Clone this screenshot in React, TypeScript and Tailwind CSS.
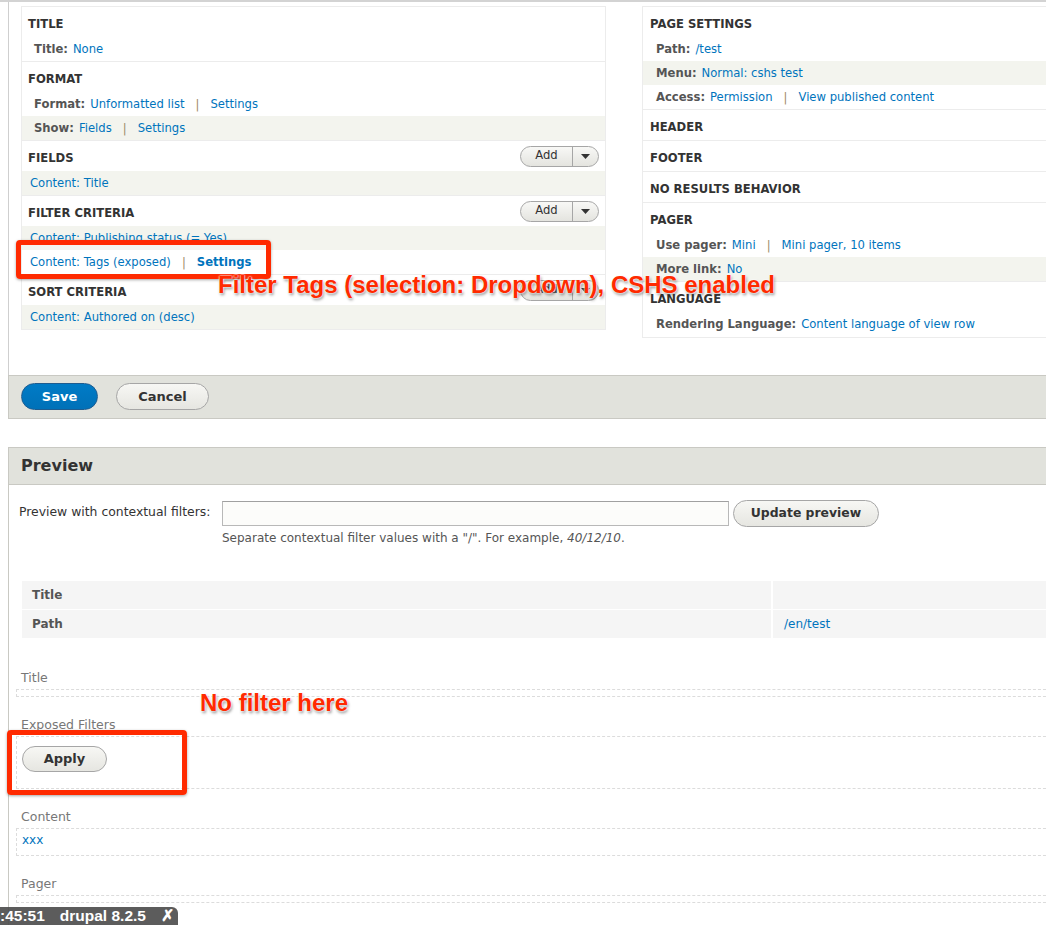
import React from "react";

const LINK = "text-[#0074bd]";

function AddBtn() {
  return (
    <div className="flex h-[21px] w-[79px] rounded-full border border-[#a6a6a6] bg-linear-to-b from-[#f8f8f6] to-[#e4e4df] text-[11.6px] font-normal text-[#333] normal-case">
      <span className="flex w-[52px] items-center justify-center border-r border-[#a6a6a6]">Add</span>
      <span className="flex flex-1 items-center justify-center">
        <svg width="9" height="5" viewBox="0 0 9 5">
          <path d="M0 0h9L4.5 5z" fill="#333" />
        </svg>
      </span>
    </div>
  );
}

function Heading({ children, add, pl = "pl-[6px]" }: { children: React.ReactNode; add?: boolean; pl?: string }) {
  return (
    <div className={"flex h-[30px] items-center justify-between pr-[6px] text-[11.6px] font-bold text-[#333] " + pl}>
      <span className="pt-[5px]">{children}</span>
      {add && <AddBtn />}
    </div>
  );
}

function Row({ children, alt, pl = "pl-[12px]" }: { children: React.ReactNode; alt?: boolean; pl?: string }) {
  return (
    <div className={"flex h-[24px] items-center pt-[2px] text-[11.6px] " + pl + (alt ? " bg-[#f3f4ee]" : "")}>{children}</div>
  );
}

function Label({ children }: { children: React.ReactNode }) {
  return <span className="mr-[5px] font-bold text-[#555]">{children}</span>;
}

function Sep() {
  return <span className="mx-[11px] text-[#a08a66]">|</span>;
}

function Bucket({ children, first }: { children: React.ReactNode; first?: boolean }) {
  return <div className={first ? "" : "border-t border-[#ececec]"}>{children}</div>;
}

function PreviewSection({ label, children, boxClass }: { label: string; children?: React.ReactNode; boxClass: string }) {
  return (
    <div>
      <div className="h-[18px] pl-[5px] text-[12.5px] leading-[18px] text-[#777]">{label}</div>
      <div className={"mt-[2px] border border-dashed border-[#dcdcdc] " + boxClass}>{children}</div>
    </div>
  );
}

export default function App() {
  return (
    <div className="relative h-[925px] w-[1046px] overflow-hidden bg-white font-['DejaVu_Sans',sans-serif] text-[#333]">
      {/* top edge */}
      <div className="h-[2px] bg-[#d3d3d3]" />

      {/* display area */}
      <div className="ml-[8px] flex h-[373px] gap-[36px] border-l border-[#cfcfcf] pl-[12px] pt-[4px]">
        {/* left column */}
        <div className="h-[324px] w-[585px] shrink-0 border border-[#ececec]">
          <Bucket first>
            <Heading>TITLE</Heading>
            <Row>
              <Label>Title:</Label>
              <span className={LINK}>None</span>
            </Row>
          </Bucket>
          <Bucket>
            <Heading>FORMAT</Heading>
            <Row>
              <Label>Format:</Label>
              <span className={LINK}>Unformatted list</span>
              <Sep />
              <span className={LINK}>Settings</span>
            </Row>
            <Row alt>
              <Label>Show:</Label>
              <span className={LINK}>Fields</span>
              <Sep />
              <span className={LINK}>Settings</span>
            </Row>
          </Bucket>
          <Bucket>
            <Heading add>FIELDS</Heading>
            <Row alt pl="pl-[8px]">
              <span className={LINK}>Content: Title</span>
            </Row>
          </Bucket>
          <Bucket>
            <Heading add>FILTER CRITERIA</Heading>
            <Row alt pl="pl-[8px]">
              <span className={LINK}>Content: Publishing status (= Yes)</span>
            </Row>
            <Row pl="pl-[8px]">
              <span className={LINK}>Content: Tags (exposed)</span>
              <Sep />
              <span className={LINK + " font-bold"}>Settings</span>
            </Row>
          </Bucket>
          <Bucket>
            <Heading add>SORT CRITERIA</Heading>
            <Row alt pl="pl-[8px]">
              <span className={LINK}>Content: Authored on (desc)</span>
            </Row>
          </Bucket>
        </div>

        {/* right column */}
        <div className="h-[332px] w-[440px] shrink-0 border border-[#ececec]">
          <Bucket first>
            <Heading pl="pl-[7px]">PAGE SETTINGS</Heading>
            <Row pl="pl-[13px]">
              <Label>Path:</Label>
              <span className={LINK}>/test</span>
            </Row>
            <Row alt pl="pl-[13px]">
              <Label>Menu:</Label>
              <span className={LINK}>Normal: cshs test</span>
            </Row>
            <Row pl="pl-[13px]">
              <Label>Access:</Label>
              <span className={LINK}>Permission</span>
              <Sep />
              <span className={LINK}>View published content</span>
            </Row>
          </Bucket>
          <Bucket>
            <Heading pl="pl-[7px]">HEADER</Heading>
          </Bucket>
          <Bucket>
            <Heading pl="pl-[7px]">FOOTER</Heading>
          </Bucket>
          <Bucket>
            <Heading pl="pl-[7px]">NO RESULTS BEHAVIOR</Heading>
          </Bucket>
          <Bucket>
            <Heading pl="pl-[7px]">PAGER</Heading>
            <Row pl="pl-[13px]">
              <Label>Use pager:</Label>
              <span className={LINK}>Mini</span>
              <Sep />
              <span className={LINK}>Mini pager, 10 items</span>
            </Row>
            <Row alt pl="pl-[13px]">
              <Label>More link:</Label>
              <span className={LINK}>No</span>
            </Row>
          </Bucket>
          <Bucket>
            <Heading pl="pl-[7px]">LANGUAGE</Heading>
            <Row pl="pl-[13px]">
              <Label>Rendering Language:</Label>
              <span className={LINK}>Content language of view row</span>
            </Row>
          </Bucket>
        </div>
      </div>

      {/* save bar */}
      <div className="ml-[8px] flex h-[44px] items-start gap-[18px] border-y border-l border-[#c9c9c3] bg-[#e1e2dc] pl-[12px] pt-[7px]">
        <button className="h-[27px] w-[77px] rounded-full border border-[#1e5c90] bg-linear-to-b from-[#007bc6] to-[#0071b8] text-[13px] font-bold text-white">
          Save
        </button>
        <button className="h-[27px] w-[93px] rounded-full border border-[#a6a6a6] bg-linear-to-b from-[#f7f7f4] to-[#e6e6e1] text-[13px] font-bold text-[#333]">
          Cancel
        </button>
      </div>

      {/* preview */}
      <div className="ml-[8px] mt-[28px] border-l border-t border-b border-[#c9c9c3]">
        <div className="flex h-[37px] items-center border-b border-[#c9c9c3] bg-[#e1e2dc] pl-[12px] text-[16px] font-bold text-[#333]">
          Preview
        </div>
        <div className="h-[429px]">
          <div className="mt-[15px] flex items-start pl-[10px]">
            <div className="w-[203px] pt-[3px] text-[12.4px] leading-[18px] text-[#333]">Preview with contextual filters:</div>
            <div>
              <div className="flex items-center gap-[4px]">
                <div className="h-[25px] w-[507px] border border-[#b8b8b8] border-t-[#a0a0a0] bg-[#fcfcfa]" />
                <button className="h-[27px] w-[146px] rounded-full border border-[#a6a6a6] bg-linear-to-b from-[#f7f7f4] to-[#e6e6e1] text-[12.4px] font-bold text-[#333]">
                  Update preview
                </button>
              </div>
              <div className="mt-[3px] text-[12px] leading-[16px] text-[#555]">
                Separate contextual filter values with a "/". For example, <em>40/12/10</em>.
              </div>
            </div>
          </div>

          {/* table */}
          <div className="ml-[13px] mt-[35px] text-[12px] font-bold text-[#555]">
            <div className="flex h-[28px] items-center bg-[#f5f5f5]">
              <div className="h-full w-[751px] border-r-2 border-white pl-[10px] leading-[28px]">Title</div>
              <div className="flex-1" />
            </div>
            <div className="flex h-[29px] items-center border-t border-white bg-[#f5f5f5]">
              <div className="h-full w-[751px] border-r-2 border-white pl-[10px] leading-[28px]">Path</div>
              <div className={"pl-[11px] font-normal " + LINK}>/en/test</div>
            </div>
          </div>

          {/* view sections */}
          <div className="-mr-[20px] ml-[7px] mt-[31px] flex flex-col gap-[19px]">
            <PreviewSection label="Title" boxClass="h-[8px]" />
            <PreviewSection label="Exposed Filters" boxClass="h-[53px] pl-[5px] pt-[9px]">
              <button className="h-[26px] w-[85px] rounded-full border border-[#a6a6a6] bg-linear-to-b from-[#f7f7f4] to-[#e6e6e1] text-[13px] font-bold text-[#333]">
                Apply
              </button>
            </PreviewSection>
            <PreviewSection label="Content" boxClass={"h-[28px] pl-[5px] pt-[3px] text-[12px] leading-[16px] " + LINK}>
              xxx
            </PreviewSection>
            <PreviewSection label="Pager" boxClass="h-[8px]" />
          </div>
        </div>
      </div>
      <div className="h-[20px] bg-[#f2f2f2]" />

      {/* annotations */}
      <div className="pointer-events-none absolute left-[16px] top-[240px] h-[39px] w-[255px] rounded-[4px] border-[5px] border-[#ff2a00] shadow-[0_1px_3px_rgba(0,0,0,0.35)]" />
      <div className="pointer-events-none absolute left-[218px] top-[270px] font-['Liberation_Sans',sans-serif] text-[24px] font-bold leading-[30px] text-[#ff2a00] [text-shadow:0_0_2px_#fff,0_0_2px_#fff,1px_2px_3px_rgba(0,0,0,0.45)]">
        Filter Tags (selection: Dropdown), CSHS enabled
      </div>
      <div className="pointer-events-none absolute left-[200px] top-[688px] font-['Liberation_Sans',sans-serif] text-[24px] font-bold leading-[30px] text-[#ff2a00] [text-shadow:0_0_2px_#fff,0_0_2px_#fff,1px_2px_3px_rgba(0,0,0,0.45)]">
        No filter here
      </div>
      <div className="pointer-events-none absolute left-[7px] top-[730px] h-[65px] w-[180px] rounded-[4px] border-[5px] border-[#ff2a00] shadow-[0_1px_3px_rgba(0,0,0,0.35)]" />

      {/* bottom toolbar */}
      <div className="absolute bottom-0 left-0 flex h-[18px] w-[178px] items-center rounded-tr-[6px] bg-[#4a4a4a]/90 font-['Liberation_Sans',sans-serif] text-[15.5px] font-bold text-white">
        <span className="leading-[18px]">:45:51</span>
        <span className="ml-[15px] leading-[18px]">drupal 8.2.5</span>
        <span className="ml-[15px] leading-[18px]">✗</span>
      </div>
    </div>
  );
}
